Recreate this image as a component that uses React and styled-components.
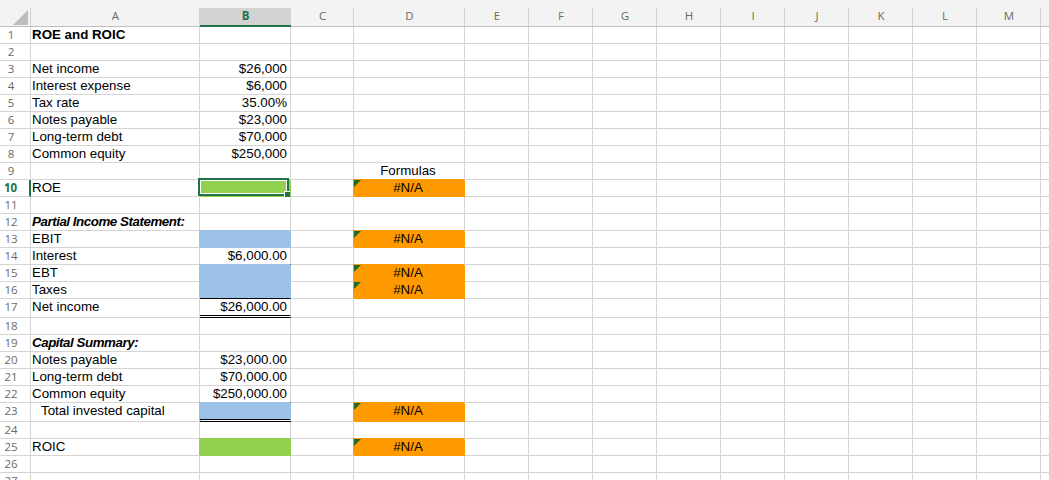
import React from 'react';
import styled, { createGlobalStyle } from 'styled-components';

const GRID = '#d4d4d4';
const XL_GREEN = '#217346';
const FILL_GREEN = '#92d050';
const FILL_BLUE = '#9bc2e6';
const FILL_ORANGE = '#ff9900';
const COLS = '31px 169px 91px 63px 111px repeat(10, 64px)';
const HEAD_FONT = `'Open Sans', 'Noto Sans', sans-serif`;

const Global = createGlobalStyle`
  html, body { margin: 0; padding: 0; background: #fff; }
  body { overflow: hidden; }
`;

const Viewport = styled.div`
  width: 1049px;
  height: 480px;
  overflow: hidden;
  background: #fff;
`;

const Sheet = styled.div`
  width: 1105px;
  display: flex;
  flex-direction: column;
`;

const HeadRow = styled.div`
  display: grid;
  grid-template-columns: ${COLS};
  height: 27px;
  background: #f3f3f3;
`;

const sep = `linear-gradient(${GRID}, ${GRID})`;
const selBg = `linear-gradient(#d2d2d2, #d2d2d2)`;

const ColHead = styled.div`
  box-sizing: border-box;
  border-bottom: ${p => (p.$sel ? `2px solid ${XL_GREEN}` : '1px solid #bfbfbf')};
  background-image: ${p => (p.$sel ? `${sep}, ${selBg}` : sep)};
  background-size: ${p => (p.$sel ? '1px calc(100% - 8px), 100% calc(100% - 8px)' : '1px calc(100% - 8px)')};
  background-position: right bottom, left bottom;
  background-repeat: no-repeat;
  padding-top: 9px;
  line-height: 14px;
  text-align: center;
  font-family: ${HEAD_FONT};
  font-size: 11.5px;
  font-weight: ${p => (p.$sel ? 700 : 400)};
  color: ${p => (p.$sel ? XL_GREEN : '#6a6a6a')};
`;

const Corner = styled.div`
  box-sizing: border-box;
  border-bottom: 1px solid #bfbfbf;
  background-image: ${sep};
  background-size: 1px calc(100% - 8px);
  background-position: right bottom;
  background-repeat: no-repeat;
  display: flex;
  justify-content: flex-end;
  align-items: flex-end;
  padding: 0 3px 1px 0;
`;

const CornerTri = styled.span`
  display: block;
  width: 15px;
  height: 15px;
  background: #bdbdbd;
  clip-path: polygon(100% 0, 100% 100%, 0 100%);
`;

const Row = styled.div`
  display: grid;
  grid-template-columns: ${COLS};
  height: ${p => p.$h}px;
`;

const RowHead = styled.div`
  box-sizing: border-box;
  border-right: ${p => (p.$sel ? `2px solid ${XL_GREEN}` : `1px solid ${GRID}`)};
  border-bottom: 1px solid ${GRID};
  padding-right: 8px;
  text-align: center;
  font-family: ${HEAD_FONT};
  font-size: 11.5px;
  line-height: 16px;
  font-weight: ${p => (p.$sel ? 700 : 400)};
  color: ${p => (p.$sel ? XL_GREEN : '#6a6a6a')};
  background: #fff;
`;

const bottomBorder = p => {
  if (p.$bottom === 'double') return '3px double #000';
  if (p.$bottom === 'thin') return '1px solid #000';
  return `1px solid ${p.$fill || GRID}`;
};

const Cell = styled.div`
  position: relative;
  box-sizing: border-box;
  border-right: 1px solid ${p => p.$fill || GRID};
  border-bottom: ${bottomBorder};
  background-color: ${p => p.$fill || '#fff'};
  background-clip: padding-box;
  box-shadow: ${p => (p.$fill ? `-1px -1px 0 0 ${p.$fill}` : 'none')};
  padding: 0 3px 0 ${p => (p.$indent ? 10 : 1)}px;
  text-align: ${p => p.$align || 'left'};
  font-family: 'Liberation Sans', Arial, sans-serif;
  font-size: 13.333px;
  line-height: 16px;
  font-weight: ${p => (p.$bold ? 700 : 400)};
  font-style: ${p => (p.$italic ? 'italic' : 'normal')};
  letter-spacing: ${p => (p.$italic ? '-0.45px' : 'normal')};
  color: #000;
  white-space: nowrap;
`;

const ErrTri = styled.span`
  position: absolute;
  top: 0;
  left: 0;
  width: 0;
  height: 0;
  border-top: 7px solid #1e6b24;
  border-right: 7px solid transparent;
`;

const Selection = styled.span`
  position: absolute;
  z-index: 3;
  left: -2px;
  top: -2px;
  right: 1px;
  bottom: 0;
  border: 2px solid ${XL_GREEN};
  box-shadow: inset 0 0 0 1px #fff;
  pointer-events: none;
`;

const Handle = styled.span`
  position: absolute;
  right: -3px;
  bottom: -3px;
  width: 5px;
  height: 5px;
  background: ${XL_GREEN};
  border-left: 1px solid #fff;
  border-top: 1px solid #fff;
`;

const COL_LETTERS = ['A', 'B', 'C', 'D', 'E', 'F', 'G', 'H', 'I', 'J', 'K', 'L', 'M', ''];
const TAIL = ['E', 'F', 'G', 'H', 'I', 'J', 'K', 'L', 'M', 'N'];

const ROWS = [
  { n: 1, a: { t: 'ROE and ROIC', bold: true } },
  { n: 2 },
  { n: 3, a: { t: 'Net income' }, b: { t: '$26,000' } },
  { n: 4, a: { t: 'Interest expense' }, b: { t: '$6,000' } },
  { n: 5, a: { t: 'Tax rate' }, b: { t: '35.00%' } },
  { n: 6, a: { t: 'Notes payable' }, b: { t: '$23,000' } },
  { n: 7, a: { t: 'Long-term debt' }, b: { t: '$70,000' } },
  { n: 8, a: { t: 'Common equity' }, b: { t: '$250,000' } },
  { n: 9, d: { t: 'Formulas' } },
  { n: 10, sel: true, a: { t: 'ROE' }, b: { fill: FILL_GREEN, selected: true }, d: { t: '#N/A', fill: FILL_ORANGE, err: true } },
  { n: 11 },
  { n: 12, a: { t: 'Partial Income Statement:', bold: true, italic: true } },
  { n: 13, a: { t: 'EBIT' }, b: { fill: FILL_BLUE }, d: { t: '#N/A', fill: FILL_ORANGE, err: true } },
  { n: 14, a: { t: 'Interest' }, b: { t: '$6,000.00', bottom: 'thin' } },
  { n: 15, a: { t: 'EBT' }, b: { fill: FILL_BLUE }, d: { t: '#N/A', fill: FILL_ORANGE, err: true } },
  { n: 16, a: { t: 'Taxes' }, b: { fill: FILL_BLUE, bottom: 'thin' }, d: { t: '#N/A', fill: FILL_ORANGE, err: true } },
  { n: 17, h: 19, a: { t: 'Net income' }, b: { t: '$26,000.00', bottom: 'double' } },
  { n: 18 },
  { n: 19, a: { t: 'Capital Summary:', bold: true, italic: true } },
  { n: 20, a: { t: 'Notes payable' }, b: { t: '$23,000.00' } },
  { n: 21, a: { t: 'Long-term debt' }, b: { t: '$70,000.00' } },
  { n: 22, a: { t: 'Common equity' }, b: { t: '$250,000.00', bottom: 'thin' } },
  { n: 23, h: 19, a: { t: 'Total invested capital', indent: true }, b: { fill: FILL_BLUE, bottom: 'double' }, d: { t: '#N/A', fill: FILL_ORANGE, err: true } },
  { n: 24 },
  { n: 25, a: { t: 'ROIC' }, b: { fill: FILL_GREEN }, d: { t: '#N/A', fill: FILL_ORANGE, err: true } },
  { n: 26 },
  { n: 27 },
];

function SheetRow({ row }) {
  const { n, h = 17, sel, a = {}, b = {}, d = {} } = row;
  return (
    <Row $h={h}>
      <RowHead $sel={sel}>{n}</RowHead>
      <Cell $bold={a.bold} $italic={a.italic} $indent={a.indent}>{a.t}</Cell>
      <Cell $align="right" $fill={b.fill} $bottom={b.bottom}>
        {b.t}
        {b.selected && (
          <Selection>
            <Handle />
          </Selection>
        )}
      </Cell>
      <Cell />
      <Cell $align="center" $fill={d.fill}>
        {d.err && <ErrTri />}
        {d.t}
      </Cell>
      {TAIL.map(k => (
        <Cell key={k} />
      ))}
    </Row>
  );
}

export default function App() {
  return (
    <Viewport>
      <Global />
      <Sheet>
        <HeadRow>
          <Corner>
            <CornerTri />
          </Corner>
          {COL_LETTERS.map((l, i) => (
            <ColHead key={i} $sel={l === 'B'}>
              {l}
            </ColHead>
          ))}
        </HeadRow>
        {ROWS.map(r => (
          <SheetRow key={r.n} row={r} />
        ))}
      </Sheet>
    </Viewport>
  );
}
